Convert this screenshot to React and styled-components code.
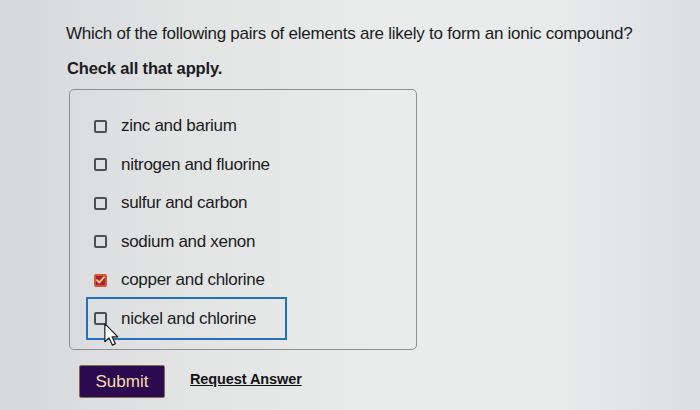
import React from "react";
import styled, { createGlobalStyle } from "styled-components";

const Global = createGlobalStyle`
  html, body { margin: 0; padding: 0; }
  body {
    width: 700px;
    height: 410px;
    overflow: hidden;
    font-family: "Liberation Sans", Arial, sans-serif;
    color: #1c1c1e;
    background: linear-gradient(90deg, #d6d7da 0%, #e2e4e4 25%, #e9ecea 55%, #e8ebea 80%, #dcdee3 100%);
  }
`;

const Page = styled.main`
  padding: 24px 0 0 66px;
`;

const Question = styled.p`
  margin: 0;
  font-size: 17px;
  line-height: 20px;
  letter-spacing: -0.25px;
`;

const Instruction = styled.p`
  margin: 14px 0 0 1px;
  font-size: 16.5px;
  line-height: 20px;
  font-weight: 700;
  letter-spacing: -0.15px;
`;

const OptionBox = styled.div`
  margin: 11px 0 0 3px;
  width: 348px;
  box-sizing: border-box;
  border: 1px solid #8d8f92;
  border-radius: 5px;
  padding: 17px 0 11px 24px;
  display: flex;
  flex-direction: column;
`;

const Row = styled.div`
  height: 38.5px;
  display: flex;
  align-items: center;
`;

const Option = styled.label`
  position: relative;
  display: inline-flex;
  align-items: center;
  gap: 14px;
  height: 39px;
  margin-left: -8px;
  padding: 0 29px 0 6px;
  border: 2px solid ${(p) => (p.$focused ? "#2570bd" : "transparent")};
  font-size: 17px;
  letter-spacing: -0.3px;
  cursor: pointer;
`;

const Box = styled.span`
  width: 13px;
  height: 13px;
  box-sizing: border-box;
  border-radius: 2px;
  border: 2px solid ${(p) => (p.$checked ? "#d0563a" : "#4d4f52")};
  background: ${(p) => (p.$checked ? "#b01e3a" : "transparent")};
  display: inline-flex;
  align-items: center;
  justify-content: center;
  flex: none;
`;

const Cursor = styled.svg`
  position: absolute;
  left: 16px;
  top: 24px;
  width: 15px;
  height: 23px;
  overflow: visible;
`;

const Actions = styled.div`
  display: flex;
  align-items: center;
  gap: 25px;
  margin: 15px 0 0 13px;
`;

const Submit = styled.button`
  width: 86px;
  height: 33px;
  background: #2c0a50;
  color: #f2dfa8;
  border: 1px solid #8a6a4c;
  border-radius: 2px;
  font-family: "Liberation Sans", Arial, sans-serif;
  font-size: 17px;
  cursor: pointer;
`;

const RequestLink = styled.a`
  font-size: 14.5px;
  font-weight: 700;
  color: #141414;
  text-decoration: underline;
  letter-spacing: -0.1px;
  margin-top: -5px;
`;

const options = [
  { text: "zinc and barium" },
  { text: "nitrogen and fluorine" },
  { text: "sulfur and carbon" },
  { text: "sodium and xenon" },
  { text: "copper and chlorine", checked: true },
  { text: "nickel and chlorine", focused: true },
];

export default function App() {
  return (
    <>
      <Global />
      <Page>
        <Question>
          Which of the following pairs of elements are likely to form an ionic compound?
        </Question>
        <Instruction>Check all that apply.</Instruction>
        <OptionBox>
          {options.map((o) => (
            <Row key={o.text}>
              <Option $focused={o.focused}>
                <Box $checked={o.checked}>
                  {o.checked && (
                    <svg width="9" height="8" viewBox="0 0 9 8">
                      <path d="M1 4.2 L3.4 6.5 L8 1.2" fill="none" stroke="#f6d77a" strokeWidth="1.8" strokeLinecap="round" strokeLinejoin="round" />
                    </svg>
                  )}
                </Box>
                {o.text}
                {o.focused && (
                  <Cursor viewBox="0 0 12 19">
                    <path
                      d="M0.5 0.5 L0.5 15.5 L4 12.3 L6.8 18.3 L9.2 17.2 L6.5 11.4 L11.2 11.4 Z"
                      fill="#ffffff"
                      stroke="#1e1e1e"
                      strokeWidth="1"
                      strokeLinejoin="round"
                    />
                  </Cursor>
                )}
              </Option>
            </Row>
          ))}
        </OptionBox>
        <Actions>
          <Submit type="button">Submit</Submit>
          <RequestLink href="#">Request Answer</RequestLink>
        </Actions>
      </Page>
    </>
  );
}
